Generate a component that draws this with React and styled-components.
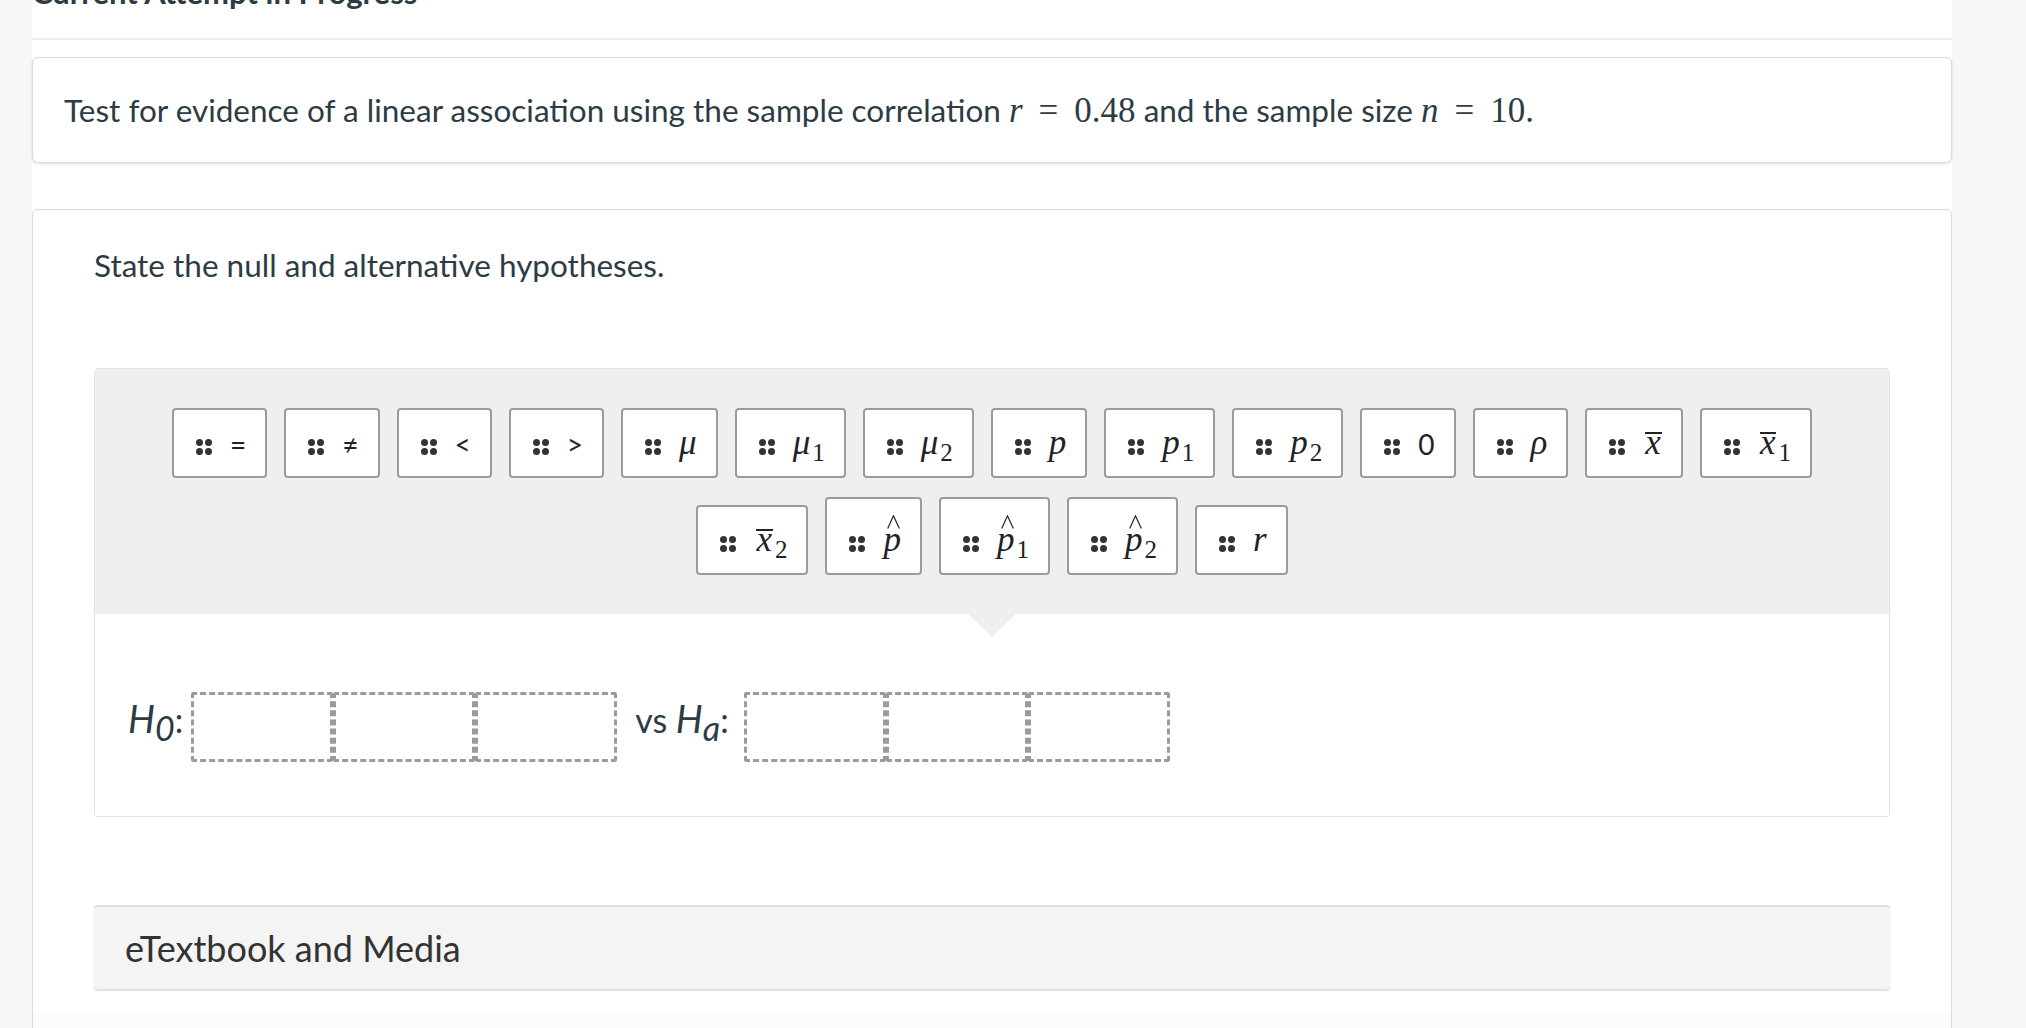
import React from 'react';
import styled, { createGlobalStyle } from 'styled-components';

const GlobalStyle = createGlobalStyle`
  html, body {
    margin: 0;
    padding: 0;
    overflow: hidden;
    background: #f7f7f7;
  }
  body {
    font-family: Lato, "Noto Sans", sans-serif;
    color: #2d3b45;
  }
`;

const row1 = [
  { rel: '=' },
  { rel: '≠' },
  { rel: '<' },
  { rel: '>' },
  { v: 'μ' },
  { v: 'μ', sub: '1' },
  { v: 'μ', sub: '2' },
  { v: 'p' },
  { v: 'p', sub: '1' },
  { v: 'p', sub: '2' },
  { rel: '0' },
  { v: 'ρ' },
  { v: 'x', bar: true },
  { v: 'x', bar: true, sub: '1' },
];

const row2 = [
  { v: 'x', bar: true, sub: '2' },
  { v: 'p', hat: true },
  { v: 'p', hat: true, sub: '1' },
  { v: 'p', hat: true, sub: '2' },
  { v: 'r' },
];

function App() {
  return (
    <>
      <GlobalStyle />
      <Page>
        <Heading>Current Attempt in Progress</Heading>

        <QuestionCard>
          <BodyText>
            Test for evidence of a linear association using the sample correlation{' '}
            <MathVar>r</MathVar>
            <MathOp>=</MathOp>
            <MathNum>0.48</MathNum> and the sample size <MathVar>n</MathVar>
            <MathOp>=</MathOp>
            <MathNum>10.</MathNum>
          </BodyText>
        </QuestionCard>

        <PartCard>
          <PartBody>
            <BodyText>State the null and alternative hypotheses.</BodyText>

            <Builder>
              <Tray>
                <ChipRow>
                  {row1.map((item, i) => (
                    <Chip key={i} item={item} />
                  ))}
                </ChipRow>
                <ChipRow>
                  {row2.map((item, i) => (
                    <Chip key={i} item={item} />
                  ))}
                </ChipRow>
              </Tray>
              <DropArea>
                <HypRow>
                  <HypLabel>
                    <HLetter>H</HLetter>
                    <HSub>0</HSub>:
                  </HypLabel>
                  <SlotGroup>
                    <Slot />
                    <Slot />
                    <Slot />
                  </SlotGroup>
                  <HypLabel $vs>
                    vs <HLetter>H</HLetter>
                    <HSub>a</HSub>:
                  </HypLabel>
                  <SlotGroup>
                    <Slot />
                    <Slot />
                    <Slot />
                  </SlotGroup>
                </HypRow>
              </DropArea>
            </Builder>

            <Resource>eTextbook and Media</Resource>
          </PartBody>
          <PartFooter />
        </PartCard>
      </Page>
    </>
  );
}

function Chip({ item }) {
  return (
    <ChipBox $tall={item.hat}>
      <Grip>
        <Dot />
        <Dot />
        <Dot />
        <Dot />
      </Grip>
      {item.rel ? (
        <RelSymbol>{item.rel}</RelSymbol>
      ) : (
        <VarSymbol>
          {item.hat ? (
            <HatWrap>
              <HatMark width="13" height="14" viewBox="0 0 13 14">
                <polyline points="0.7,13.5 6.5,0.8 12.3,13.5" fill="none" stroke="#222" strokeWidth="1.2" />
              </HatMark>
              {item.v}
            </HatWrap>
          ) : item.bar ? (
            <BarWrap>{item.v}</BarWrap>
          ) : (
            item.v
          )}
          {item.sub && <Sub>{item.sub}</Sub>}
        </VarSymbol>
      )}
    </ChipBox>
  );
}

export default App;

const Page = styled.div`
  margin-left: 32px;
  width: 1920px;
  min-height: 1028px;
  background: #ffffff;
`;

const Heading = styled.h2`
  margin: -26px 0 0;
  padding-bottom: 27px;
  border-bottom: 2px solid #ececec;
  font-size: 31px;
  font-weight: 700;
  line-height: 37px;
  color: #2d3b45;
`;

const QuestionCard = styled.div`
  margin-top: 17px;
  padding: 34px 31px;
  border: 1px solid #dadada;
  border-radius: 6px;
  box-shadow: 0 1px 3px rgba(0, 0, 0, 0.12);
  background: #fff;
`;

const BodyText = styled.div`
  font-size: 31.5px;
  line-height: 36px;
  color: #2d3b45;
`;

const MathVar = styled.span`
  font-family: "Liberation Serif", serif;
  font-style: italic;
  font-size: 35px;
  line-height: 0;
`;

const MathOp = styled.span`
  font-family: "Liberation Serif", serif;
  font-size: 35px;
  line-height: 0;
  margin: 0 16px;
`;

const MathNum = styled.span`
  font-family: "Liberation Serif", serif;
  font-size: 35px;
  line-height: 0;
`;

const PartCard = styled.div`
  margin-top: 46px;
  border: 1px solid #dadada;
  border-radius: 6px;
  background: #fff;
  overflow: hidden;
`;

const PartBody = styled.div`
  padding: 37px 61px 23px;
`;

const PartFooter = styled.div`
  height: 90px;
  background: #fbfbfb;
`;

const Builder = styled.div`
  margin-top: 85px;
  border: 1px solid #e4e4e4;
  border-radius: 4px;
`;

const Tray = styled.div`
  display: flex;
  flex-direction: column;
  align-items: center;
  gap: 19px;
  padding: 39px 0;
  background: #efefef;
`;

const ChipRow = styled.div`
  display: flex;
  align-items: flex-end;
  justify-content: center;
  gap: 17px;
`;

const ChipBox = styled.div`
  display: flex;
  align-items: flex-end;
  gap: 18px;
  box-sizing: border-box;
  min-height: ${(p) => (p.$tall ? 78 : 70)}px;
  padding: 0 19px 16px 22px;
  background: #fff;
  border: 2px solid #9b9b9b;
  border-radius: 4px;
  color: #222;
`;

const Grip = styled.span`
  display: grid;
  grid-template-columns: 7px 7px;
  gap: 2px;
  margin-bottom: 5px;
`;

const Dot = styled.span`
  width: 7px;
  height: 7px;
  border-radius: 50%;
  background: #333;
`;

const RelSymbol = styled.span`
  font-family: Lato, sans-serif;
  font-size: 28px;
  line-height: 32px;
`;

const VarSymbol = styled.span`
  position: relative;
  top: -1px;
  font-family: "Liberation Serif", serif;
  font-style: italic;
  font-size: 35px;
  line-height: 32px;
  white-space: nowrap;
`;

const Sub = styled.span`
  position: relative;
  top: 7px;
  margin-left: 2px;
  font-size: 25px;
  font-style: normal;
  line-height: 0;
`;

const BarWrap = styled.span`
  position: relative;
  display: inline-block;
  padding: 0 1px 0 2px;
  line-height: 32px;

  &::before {
    content: '';
    position: absolute;
    top: 5px;
    left: 2px;
    right: 0;
    height: 1.5px;
    background: #222;
  }
`;

const HatWrap = styled.span`
  position: relative;
  display: inline-block;
  line-height: 32px;
`;

const HatMark = styled.svg`
  position: absolute;
  top: -9px;
  left: 4px;
`;

const DropArea = styled.div`
  position: relative;
  padding: 78px 0 54px 33px;
  background: #fff;

  &::before {
    content: '';
    position: absolute;
    top: 0;
    left: 50%;
    transform: translateX(-50%);
    border-left: 24px solid transparent;
    border-right: 24px solid transparent;
    border-top: 23px solid #efefef;
  }
`;

const HypRow = styled.div`
  display: flex;
  align-items: center;
`;

const HypLabel = styled.div`
  padding-bottom: 17px;
  margin: 0 ${(p) => (p.$vs ? 15 : 8)}px 0 ${(p) => (p.$vs ? 18 : 0)}px;
  font-size: 34px;
  line-height: 40px;
  color: #2d3b45;
  white-space: pre;
`;

const HLetter = styled.span`
  font-size: 38px;
  font-style: italic;
`;

const HSub = styled.span`
  position: relative;
  top: 8px;
  font-style: italic;
`;

const SlotGroup = styled.div`
  display: flex;
`;

const Slot = styled.div`
  box-sizing: border-box;
  width: 142px;
  height: 70px;
  border: 3px dashed #9b9b9b;
  border-radius: 3px;
`;

const Resource = styled.div`
  display: flex;
  align-items: center;
  box-sizing: border-box;
  height: 84px;
  margin-top: 88px;
  padding: 0 31px;
  background: #f4f4f4;
  border-top: 2px solid #dcdcdc;
  border-radius: 4px;
  box-shadow: 0 2px 2px rgba(0, 0, 0, 0.14);
  font-size: 36px;
  color: #333;
`;
